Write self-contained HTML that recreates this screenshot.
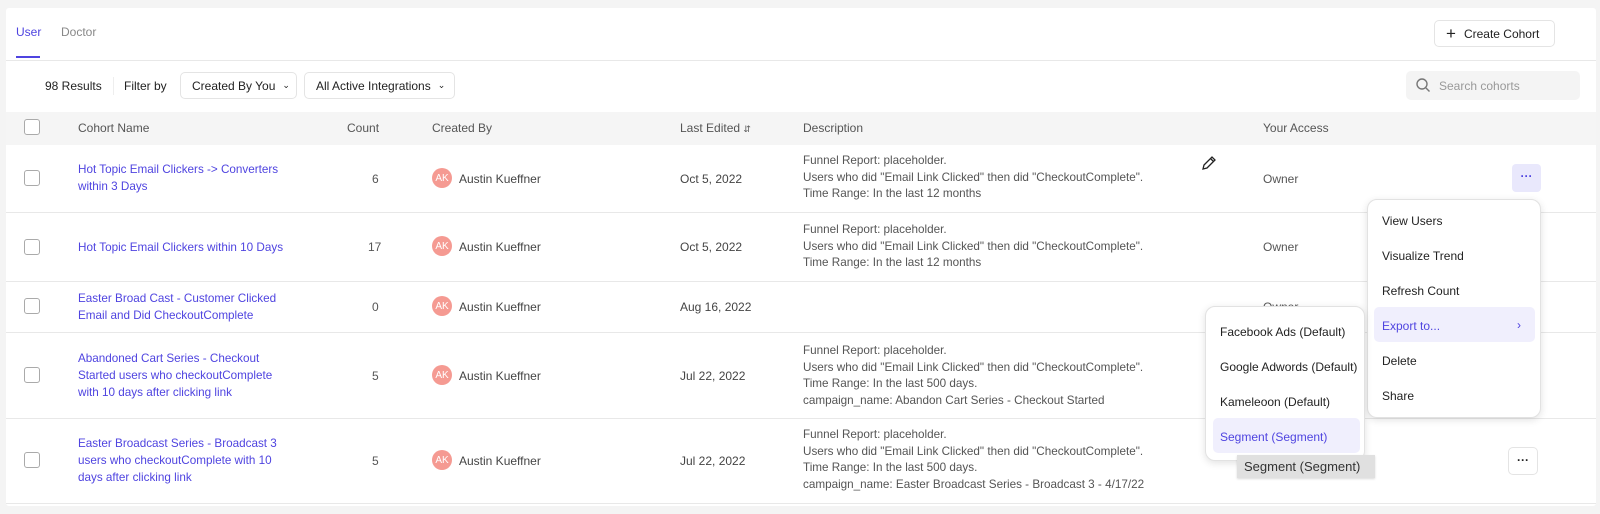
<!DOCTYPE html>
<html><head><meta charset="utf-8"><style>
*{box-sizing:border-box;margin:0;padding:0}
body{width:1600px;height:514px;background:#f4f4f4;font-family:"Liberation Sans",sans-serif;font-size:12px;color:#333;position:relative;overflow:hidden}
.card{position:absolute;left:6px;top:8px;width:1590px;height:498px;background:#fff;border-radius:3px}
.a{position:absolute;white-space:nowrap}
.btn{position:absolute;border:1px solid #e4e4e4;border-radius:5px;background:#fff;color:#222;display:flex;align-items:center;padding:0 11px;white-space:nowrap}
.line{position:absolute;left:6px;width:1590px;height:1px;background:#e8e8e8}
.cb{position:absolute;left:24px;width:16px;height:16px;border:1px solid #aaa;border-radius:3px;background:#fff}
.link{color:#4f44e0;line-height:17px;font-size:11.7px}
.desc{color:#555;line-height:16.5px;font-size:11.7px}
.av{position:absolute;left:432px;width:20px;height:20px;border-radius:50%;background:#f59a92;color:#fff;font-size:10px;display:flex;align-items:center;justify-content:center}
.menu{position:absolute;background:#fff;border:1px solid #e2e2e2;border-radius:10px;box-shadow:0 2px 8px rgba(0,0,0,.12)}
.mi{position:absolute;left:0;color:#222;font-size:12px;white-space:nowrap}
</style></head><body>
<div class="card"></div>
<div class="a" style="left:16px;top:25px;color:#4f44e0">User</div>
<div class="a" style="left:16px;top:56px;width:24px;height:2px;background:#4f44e0"></div>
<div class="a" style="left:61px;top:25px;color:#888">Doctor</div>
<div class="btn" style="left:1434px;top:20px;width:121px;height:27px;font-size:12px"><span style="font-size:17px;margin-right:8px;line-height:1">+</span>Create Cohort</div>
<div class="line" style="top:60px"></div>
<div class="a" style="left:45px;top:79px;color:#222">98 Results</div>
<div class="a" style="left:113px;top:77px;width:1px;height:18px;background:#eee"></div>
<div class="a" style="left:124px;top:79px;color:#222">Filter by</div>
<div class="btn" style="left:180px;top:72px;width:117px;height:27px">Created By You <span style="margin-left:7px;font-size:9px">&#8964;</span></div>
<div class="btn" style="left:304px;top:72px;width:151px;height:27px">All Active Integrations <span style="margin-left:7px;font-size:9px">&#8964;</span></div>
<div class="a" style="left:1406px;top:71px;width:174px;height:29px;background:#f4f4f4;border-radius:5px"></div>
<svg class="a" style="left:1415px;top:77px" width="16" height="16" viewBox="0 0 16 16"><circle cx="7" cy="7" r="5" fill="none" stroke="#777" stroke-width="1.4"/><path d="M11 11l3.5 3.5" stroke="#777" stroke-width="1.4"/></svg>
<div class="a" style="left:1439px;top:79px;color:#999">Search cohorts</div>
<div class="a" style="left:6px;top:112px;width:1590px;height:33px;background:#f5f5f5"></div>
<div class="cb" style="top:119px"></div>
<div class="a" style="left:78px;top:121px;color:#555">Cohort Name</div>
<div class="a" style="left:347px;top:121px;color:#555">Count</div>
<div class="a" style="left:432px;top:121px;color:#555">Created By</div>
<div class="a" style="left:680px;top:121px;color:#555">Last Edited <span style="font-size:9px">&#8693;</span></div>
<div class="a" style="left:803px;top:121px;color:#555">Description</div>
<div class="a" style="left:1263px;top:121px;color:#555">Your Access</div>

<div class="line" style="top:212px"></div>
<div class="line" style="top:281px"></div>
<div class="line" style="top:332px"></div>
<div class="line" style="top:418px"></div>
<div class="line" style="top:503px"></div>

<div class="cb" style="top:170px"></div>
<div class="a link" style="left:78px;top:161px">Hot Topic Email Clickers -&gt; Converters<br>within 3 Days</div>
<div class="a" style="left:372px;top:172px;color:#555">6</div>
<div class="av" style="top:168px">AK</div><div class="a" style="left:459px;top:172px;color:#444">Austin Kueffner</div>
<div class="a" style="left:680px;top:172px;color:#444">Oct 5, 2022</div>
<div class="a desc" style="left:803px;top:153px">Funnel Report: placeholder.<br>Users who did "Email Link Clicked" then did "CheckoutComplete".<br>Time Range: In the last 12 months</div>
<svg class="a" style="left:1200px;top:155px" width="17" height="17" viewBox="0 0 17 17"><path d="M3 14l1-4 8-8 3 3-8 8z M10.5 3.5l3 3" fill="none" stroke="#222" stroke-width="1.3"/></svg>
<div class="a" style="left:1263px;top:172px;color:#555">Owner</div>
<div class="a" style="left:1512px;top:164px;width:29px;height:28px;background:#e9e8fc;border-radius:4px;color:#4f44e0;text-align:center;font-weight:bold;line-height:24px">···</div>

<div class="cb" style="top:239px"></div>
<div class="a link" style="left:78px;top:239px">Hot Topic Email Clickers within 10 Days</div>
<div class="a" style="left:368px;top:240px;color:#555">17</div>
<div class="av" style="top:236px">AK</div><div class="a" style="left:459px;top:240px;color:#444">Austin Kueffner</div>
<div class="a" style="left:680px;top:240px;color:#444">Oct 5, 2022</div>
<div class="a desc" style="left:803px;top:222px">Funnel Report: placeholder.<br>Users who did "Email Link Clicked" then did "CheckoutComplete".<br>Time Range: In the last 12 months</div>
<div class="a" style="left:1263px;top:240px;color:#555">Owner</div>

<div class="cb" style="top:298px"></div>
<div class="a link" style="left:78px;top:290px">Easter Broad Cast - Customer Clicked<br>Email and Did CheckoutComplete</div>
<div class="a" style="left:372px;top:300px;color:#555">0</div>
<div class="av" style="top:296px">AK</div><div class="a" style="left:459px;top:300px;color:#444">Austin Kueffner</div>
<div class="a" style="left:680px;top:300px;color:#444">Aug 16, 2022</div>
<div class="a" style="left:1263px;top:300px;color:#555">Owner</div>

<div class="cb" style="top:367px"></div>
<div class="a link" style="left:78px;top:350px">Abandoned Cart Series - Checkout<br>Started users who checkoutComplete<br>with 10 days after clicking link</div>
<div class="a" style="left:372px;top:369px;color:#555">5</div>
<div class="av" style="top:365px">AK</div><div class="a" style="left:459px;top:369px;color:#444">Austin Kueffner</div>
<div class="a" style="left:680px;top:369px;color:#444">Jul 22, 2022</div>
<div class="a desc" style="left:803px;top:343px">Funnel Report: placeholder.<br>Users who did "Email Link Clicked" then did "CheckoutComplete".<br>Time Range: In the last 500 days.<br>campaign_name: Abandon Cart Series - Checkout Started</div>

<div class="cb" style="top:452px"></div>
<div class="a link" style="left:78px;top:435px">Easter Broadcast Series - Broadcast 3<br>users who checkoutComplete with 10<br>days after clicking link</div>
<div class="a" style="left:372px;top:454px;color:#555">5</div>
<div class="av" style="top:450px">AK</div><div class="a" style="left:459px;top:454px;color:#444">Austin Kueffner</div>
<div class="a" style="left:680px;top:454px;color:#444">Jul 22, 2022</div>
<div class="a desc" style="left:803px;top:427px">Funnel Report: placeholder.<br>Users who did "Email Link Clicked" then did "CheckoutComplete".<br>Time Range: In the last 500 days.<br>campaign_name: Easter Broadcast Series - Broadcast 3 - 4/17/22</div>
<div class="a" style="left:1508px;top:447px;width:30px;height:28px;border:1px solid #e4e4e4;border-radius:5px;background:#fff;color:#222;text-align:center;font-weight:bold;line-height:24px">···</div>

<div class="menu" style="left:1367px;top:199px;width:174px;height:219px">
<div class="mi" style="left:14px;top:14px">View Users</div>
<div class="mi" style="left:14px;top:49px">Visualize Trend</div>
<div class="mi" style="left:14px;top:84px">Refresh Count</div>
<div class="a" style="left:6px;top:107px;width:161px;height:35px;background:#f0effd;border-radius:5px"></div>
<div class="mi" style="left:14px;top:119px;color:#4f44e0">Export to...</div>
<div class="mi" style="left:149px;top:118px;color:#4f44e0">›</div>
<div class="mi" style="left:14px;top:154px">Delete</div>
<div class="mi" style="left:14px;top:189px">Share</div>
</div>
<div class="menu" style="left:1205px;top:306px;width:160px;height:155px">
<div class="mi" style="left:14px;top:18px">Facebook Ads (Default)</div>
<div class="mi" style="left:14px;top:53px">Google Adwords (Default)</div>
<div class="mi" style="left:14px;top:88px">Kameleoon (Default)</div>
<div class="a" style="left:7px;top:111px;width:147px;height:35px;background:#f0effd;border-radius:5px"></div>
<div class="mi" style="left:14px;top:123px;color:#4f44e0">Segment (Segment)</div>
</div>
<div class="a" style="left:1237px;top:455px;width:138px;height:23px;background:#e0e0e0;color:#333;font-size:13px;line-height:23px;padding-left:7px;box-shadow:0 1px 2px rgba(0,0,0,.15)">Segment (Segment)</div>
</body></html>
